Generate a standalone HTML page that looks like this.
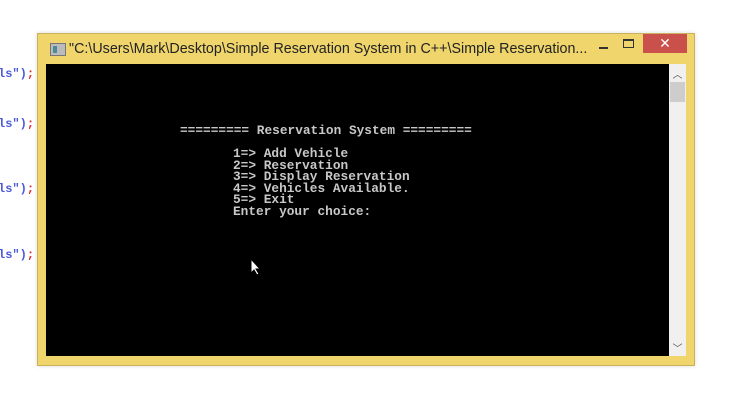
<!DOCTYPE html>
<html><head><style>
body{margin:0;width:750px;height:401px;background:#fff;position:relative;overflow:hidden;font-family:"Liberation Sans",sans-serif}
.code{position:absolute;left:-2px;font-family:"Liberation Mono",monospace;font-size:12px;font-weight:bold;color:#4a5ad8}
.code span{color:#e02020}
#win{position:absolute;left:37px;top:33px;width:656px;height:331px;background:#efd56c;border:1px solid #c9b25a;box-shadow:0 0 4px rgba(0,0,0,.15)}
#title{position:absolute;left:31px;top:7px;font-size:14.3px;color:#222;white-space:nowrap}
#ico{position:absolute;left:12px;top:9px;width:14px;height:11px;background:#bbb;border:1px solid #777}
#ico:after{content:"";position:absolute;left:2px;top:2px;width:4px;height:7px;background:#4a8a9a}
#close{position:absolute;left:605px;top:0;width:44px;height:19px;background:#c9504b;color:#fff;text-align:center;font-size:14px;line-height:19px}
#min{position:absolute;left:561px;top:13px;width:9px;height:2px;background:#333}
#max{position:absolute;left:585px;top:5px;width:9px;height:6px;border:1px solid #333;border-top-width:2px}
#con{position:absolute;left:8px;top:30px;width:623px;height:292px;background:#000}
#sb{position:absolute;left:631px;top:30px;width:17px;height:292px;background:#f0f0f0}
#thumb{position:absolute;left:1px;top:18px;width:15px;height:20px;background:#cdcdcd}
.arr{position:absolute;left:0;width:17px;text-align:center;font-size:10px;color:#555}
pre{margin:0;position:absolute;font-family:"Liberation Mono",monospace;font-size:12.8px;line-height:11.6px;color:#c8c8c8;font-weight:bold}
</style></head><body>
<div class="code" style="top:67px">ls")<span>;</span></div>
<div class="code" style="top:117px">ls")<span>;</span></div>
<div class="code" style="top:182px">ls")<span>;</span></div>
<div class="code" style="top:248px">ls")<span>;</span></div>
<div id="win">
<div id="ico"></div>
<div id="title">"C:\Users\Mark\Desktop\Simple Reservation System in C++\Simple Reservation...</div>
<div id="min"></div><div id="max"></div>
<div id="close">✕</div>
<div id="con">
<pre style="left:134px;top:61px">========= Reservation System =========</pre>
<pre style="left:187px;top:84px">1=> Add Vehicle
2=> Reservation
3=> Display Reservation
4=> Vehicles Available.
5=> Exit
Enter your choice:</pre>
<svg style="position:absolute;left:204px;top:194px" width="12" height="18"><path d="M1 1 L1 15 L4 12 L7 17 L9 16 L6 11 L10 11 Z" fill="#fff" stroke="#000" stroke-width="1"/></svg>
</div>
<div id="sb"><div class="arr" style="top:2px">︿</div><div id="thumb"></div><div class="arr" style="top:276px">﹀</div></div>
</div>
</body></html>
